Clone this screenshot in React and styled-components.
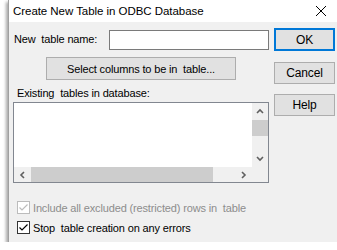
import React from 'react';
import styled, { createGlobalStyle } from 'styled-components';

const Global = createGlobalStyle`
  html, body {
    margin: 0;
    padding: 0;
    background: #ffffff;
  }
  body {
    font-family: "Liberation Sans", Arial, sans-serif;
    font-size: 11px;
    letter-spacing: -0.15px;
    color: #000;
  }
`;

const Window = styled.div`
  margin-left: 8px;
  width: 340px;
  height: 242px;
  background: #f0f0f0;
  border-left: 1px solid #a0a0a0;
  box-shadow: -2px 2px 3px rgba(0, 0, 0, 0.35);
  display: flex;
  flex-direction: column;
  overflow: hidden;
`;

const TitleBar = styled.div`
  height: 22px;
  background: #ffffff;
  display: flex;
  align-items: center;
  padding-left: 4px;
  font-size: 11.5px;
  letter-spacing: -0.05px;
  flex-shrink: 0;
`;

const Title = styled.span`
  flex: 1;
`;

const Close = styled.span`
  width: 14px;
  height: 14px;
  margin-right: 21px;
  display: flex;
  align-items: center;
  justify-content: center;
`;

const Body = styled.div`
  flex: 1;
  display: flex;
  gap: 5px;
  padding: 6px 0 0 4px;
`;

const Left = styled.div`
  width: 256px;
  display: flex;
  flex-direction: column;
`;

const Right = styled.div`
  width: 61px;
  display: flex;
  flex-direction: column;
`;

const NameRow = styled.div`
  display: flex;
  align-items: center;
  height: 23px;
`;

const Label = styled.span`
  white-space: pre;
  padding-left: ${p => p.$indent || 0}px;
  margin-top: ${p => p.$top || 0}px;
  line-height: 13px;
`;

const Input = styled.div`
  margin-left: auto;
  width: 158px;
  height: 18px;
  background: #fff;
  border: 1px solid #7a7a7a;
`;

const Button = styled.div`
  box-sizing: border-box;
  width: ${p => p.$w || 61}px;
  height: ${p => p.$h || 22}px;
  margin-top: ${p => p.$top || 0}px;
  margin-left: ${p => p.$left || 0}px;
  background: #e1e1e1;
  border: ${p => (p.$default ? '2px solid #0078d7' : '1px solid #adadad')};
  display: flex;
  align-items: center;
  justify-content: center;
  white-space: pre;
  font-size: ${p => p.$fs || 11}px;
`;

const List = styled.div`
  margin-top: 2px;
  height: 79px;
  border: 1px solid #828790;
  background: #fff;
  display: grid;
  grid-template-columns: 1fr 16px;
  grid-template-rows: 1fr 15px;
`;

const VScroll = styled.div`
  background: #f0f0f0;
  display: flex;
  flex-direction: column;
  align-items: center;
`;

const HScroll = styled.div`
  background: #f0f0f0;
  display: flex;
  align-items: center;
`;

const Arrow = styled.div`
  width: ${p => (p.$h ? 17 : 16)}px;
  height: ${p => (p.$h ? 15 : 17)}px;
  display: flex;
  align-items: center;
  justify-content: center;
  flex-shrink: 0;
`;

const Thumb = styled.div`
  background: #cdcdcd;
  ${p => (p.$h ? 'height: 15px; flex: 1;' : 'width: 16px; height: 16px;')}
`;

const Spacer = styled.div`
  flex: ${p => p.$fixed ? `0 0 ${p.$fixed}px` : 1};
`;

const Corner = styled.div`
  background: #f0f0f0;
`;

const Check = styled.div`
  display: flex;
  align-items: center;
  gap: 3px;
  margin-top: ${p => p.$top || 0}px;
  padding-left: 4px;
  color: ${p => (p.$disabled ? '#8d8d8d' : '#000')};
  white-space: pre;
`;

const Box = styled.div`
  box-sizing: border-box;
  width: 13px;
  height: 13px;
  background: #fff;
  border: 1px solid ${p => (p.$disabled ? '#bcbcbc' : '#333')};
  display: flex;
  align-items: center;
  justify-content: center;
`;

const Chevron = ({ dir }) => {
  const d = {
    up: 'M1 5 L4 2 L7 5',
    down: 'M1 2 L4 5 L7 2',
    left: 'M5 1 L2 4 L5 7',
    right: 'M2 1 L5 4 L2 7',
  }[dir];
  return (
    <svg width="8" height="8" viewBox="0 0 8 8">
      <path d={d} fill="none" stroke="#606060" strokeWidth="1.6" />
    </svg>
  );
};

const Tick = ({ color }) => (
  <svg width="11" height="11" viewBox="0 0 11 11">
    <path d="M1.5 5.5 L4 8 L9.5 2.5" fill="none" stroke={color} strokeWidth="1.2" />
  </svg>
);

export default function App() {
  return (
    <>
      <Global />
      <Window>
        <TitleBar>
          <Title>Create New Table in ODBC Database</Title>
          <Close>
            <svg width="12" height="12" viewBox="0 0 12 12">
              <path d="M1 1 L11 11 M11 1 L1 11" stroke="#000" strokeWidth="1" />
            </svg>
          </Close>
        </TitleBar>
        <Body>
          <Left>
            <NameRow>
              <Label $indent={1}>New  table name:</Label>
              <Input />
            </NameRow>
            <Button $w={190} $h={23} $left={33} $top={6}>Select columns to be in  table...</Button>
            <Label $indent={4} $top={7}>Existing  tables in database:</Label>
            <List>
              <div />
              <VScroll>
                <Arrow><Chevron dir="up" /></Arrow>
                <Thumb />
                <Spacer />
                <Arrow><Chevron dir="down" /></Arrow>
              </VScroll>
              <HScroll>
                <Arrow $h><Chevron dir="left" /></Arrow>
                <Thumb $h />
                <Spacer $fixed={22} />
                <Arrow $h><Chevron dir="right" /></Arrow>
              </HScroll>
              <Corner />
            </List>
            <Check $disabled $top={18}>
              <Box $disabled><Tick color="#bcbcbc" /></Box>
              Include all excluded (restricted) rows in  table
            </Check>
            <Check $top={7}>
              <Box><Tick color="#000" /></Box>
              Stop  table creation on any errors
            </Check>
          </Left>
          <Right>
            <Button $default $h={23} $fs={12}>OK</Button>
            <Button $top={11} $fs={12}>Cancel</Button>
            <Button $top={10} $fs={12}>Help</Button>
          </Right>
        </Body>
      </Window>
    </>
  );
}
